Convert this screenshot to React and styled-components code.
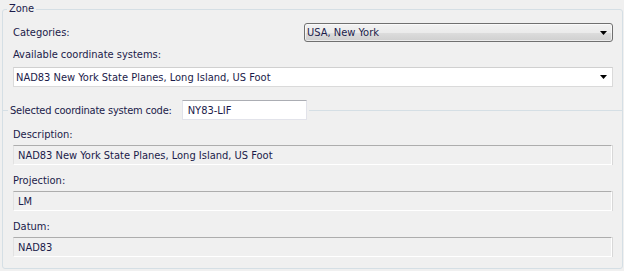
import React from "react";
import styled, { createGlobalStyle } from "styled-components";

const Global = createGlobalStyle`
  html, body { margin: 0; padding: 0; background: #f0f0f0; }
  body {
    font-family: "DejaVu Sans Condensed", "DejaVu Sans", sans-serif;
    font-stretch: condensed;
    font-size: 11px;
    color: #1b1b4a;
  }
  * { box-sizing: border-box; }
`;

const Page = styled.div`
  width: 624px;
  height: 271px;
  padding: 2px 1px 0 2px;
`;

const Group = styled.fieldset`
  margin: 0;
  padding: 7px 9px 0 10px;
  border: 1px solid #d5dfe5;
  border-radius: 3px;
  min-width: 0;
  height: 267px;
`;

const Legend = styled.legend`
  margin-left: -6px;
  padding: 0 2px;
  line-height: 14px;
  height: 14px;
`;

const Row = styled.div`
  display: flex;
  align-items: center;
  justify-content: space-between;
  height: 19px;
`;

const Label = styled.div`
  line-height: 14px;
  height: 14px;
  margin-top: ${(p) => p.$top || 0}px;
  margin-bottom: ${(p) => p.$bottom ?? 3}px;
  white-space: nowrap;
`;

const Arrow = () => (
  <svg width="7" height="4" viewBox="0 0 7 4">
    <path d="M0 0H7L3.5 4Z" fill="#000" />
  </svg>
);

const DropButton = styled.div`
  width: 309px;
  height: 19px;
  border: 1px solid #707070;
  border-radius: 3px;
  background: linear-gradient(#f2f2f2 0%, #ebebeb 50%, #dddddd 51%, #cfcfcf 100%);
  display: flex;
  align-items: center;
  justify-content: space-between;
  padding: 0 5px 0 2px;
  box-shadow: inset 0 0 0 1px rgba(255, 255, 255, 0.6);
`;

const ComboBox = styled.div`
  height: 20px;
  border: 1px solid #dadada;
  border-top-color: #d0d0d0;
  background: #fff;
  display: flex;
  align-items: center;
  justify-content: space-between;
  padding: 0 5px 0 2px;
`;

const SubGroup = styled.fieldset`
  margin: 13px -9px 0 -10px;
  padding: 8px 9px 0 10px;
  border: none;
  border-top: 1px solid #d5dfe5;
  min-width: 0;
`;

const SubLegend = styled.legend`
  margin-left: -5px;
  padding: 0 2px;
  display: flex;
  align-items: center;
  gap: 10px;
  height: 20px;
`;

const LegendText = styled.span`
  letter-spacing: -0.2px;
`;

const CodeInput = styled.div`
  width: 125px;
  height: 20px;
  background: #fff;
  border: 1px solid #e2e3ea;
  border-top-color: #abadb3;
  display: flex;
  align-items: center;
  padding: 0 5px;
`;

const ReadOnly = styled.div`
  height: 20px;
  margin-bottom: 9px;
  border: 1px solid;
  border-color: #adadad #ffffff #ffffff #e2e2e2;
  box-shadow: 1px 0 0 #d8d8d8;
  margin-right: 1px;
  display: flex;
  align-items: center;
  padding: 0 4px;
`;

export default function App() {
  return (
    <>
      <Global />
      <Page>
        <Group>
          <Legend>Zone</Legend>
          <Row>
            <span>Categories:</span>
            <DropButton>
              <span>USA, New York</span>
              <Arrow />
            </DropButton>
          </Row>
          <Label $top={6} $bottom={5}>Available coordinate systems:</Label>
          <ComboBox>
            <span>NAD83 New York State Planes, Long Island, US Foot</span>
            <Arrow />
          </ComboBox>
          <SubGroup>
            <SubLegend>
              <LegendText>Selected coordinate system code:</LegendText>
              <CodeInput>NY83-LIF</CodeInput>
            </SubLegend>
            <Label>Description:</Label>
            <ReadOnly>NAD83 New York State Planes, Long Island, US Foot</ReadOnly>
            <Label>Projection:</Label>
            <ReadOnly>LM</ReadOnly>
            <Label>Datum:</Label>
            <ReadOnly>NAD83</ReadOnly>
          </SubGroup>
        </Group>
      </Page>
    </>
  );
}
